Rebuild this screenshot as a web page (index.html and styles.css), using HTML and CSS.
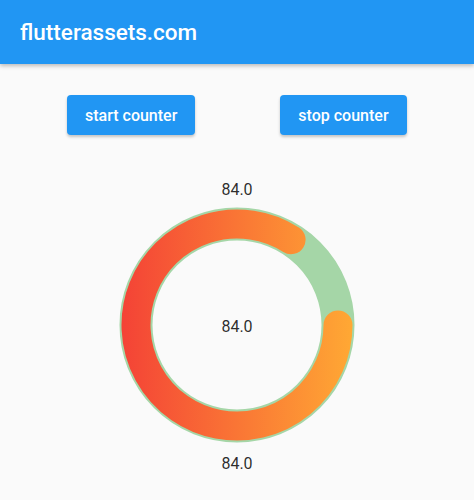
FILE: index.html
```html
<!DOCTYPE html>
<html>
<head>
<meta charset="utf-8">
<link rel="stylesheet" href="styles.css">
</head>
<body>
<header class="appbar"><span class="title">flutterassets.com</span></header>
<main class="content">
  <div class="buttons">
    <button class="btn">start counter</button>
    <button class="btn">stop counter</button>
  </div>
  <div class="value top">84.0</div>
  <div class="gauge">
    <svg width="236" height="236" viewBox="0 0 236 236">
      <defs>
        <linearGradient id="g" gradientUnits="userSpaceOnUse" x1="3" y1="0" x2="233" y2="0">
          <stop offset="0" stop-color="#f44336"/>
          <stop offset="1" stop-color="#ffa834"/>
        </linearGradient>
      </defs>
      <circle cx="118" cy="118" r="101" fill="none" stroke="#a5d6a7" stroke-width="33"/>
      <path d="M219 118 A101 101 0 1 1 172.1 32.7" fill="none" stroke="url(#g)" stroke-width="29" stroke-linecap="round"/>
    </svg>
    <div class="value center">84.0</div>
  </div>
  <div class="value bottom">84.0</div>
</main>
</body>
</html>
```
FILE: styles.css
```css
html, body {
  margin: 0;
  padding: 0;
  background: #fafafa;
  font-family: Roboto, "Liberation Sans", sans-serif;
}
body {
  width: 474px;
  height: 500px;
  overflow: hidden;
}
.appbar {
  height: 64px;
  background: #2196f3;
  display: flex;
  align-items: center;
  padding-left: 20px;
  box-shadow: 0 2px 4px rgba(0,0,0,0.25);
  position: relative;
  z-index: 1;
}
.title {
  color: #fff;
  font-size: 22.5px;
  font-weight: 500;
  margin-top: -1px;
}
.content {
  display: flex;
  flex-direction: column;
  align-items: center;
}
.buttons {
  display: flex;
  gap: 85px;
  width: 474px;
  box-sizing: border-box;
  padding-left: 67px;
  margin-top: 31px;
}
.btn {
  background: #2196f3;
  color: #fff;
  border: none;
  border-radius: 4px;
  height: 40px;
  padding: 0 18px;
  font-family: Roboto, "Liberation Sans", sans-serif;
  font-size: 16px;
  font-weight: 500;
  box-shadow: 0 2px 3px rgba(0,0,0,0.22);
}
.value {
  font-size: 16px;
  color: rgba(0,0,0,0.84);
  line-height: 20px;
}
.top {
  margin-top: 45px;
}
.gauge {
  margin-top: 7px;
  width: 236px;
  height: 236px;
  position: relative;
}
.gauge svg {
  display: block;
}
.center {
  position: absolute;
  left: 0;
  right: 0;
  top: 110px;
  text-align: center;
}
.bottom {
  margin-top: 11px;
}
```
